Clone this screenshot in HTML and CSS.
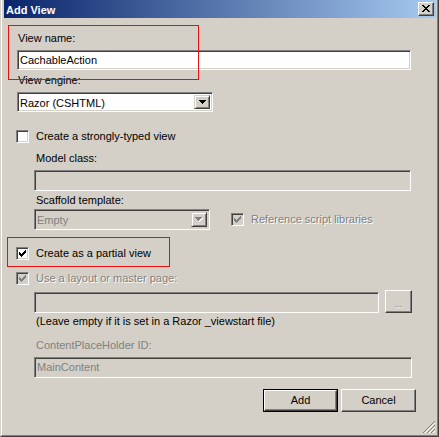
FILE: index.html
```html
<!DOCTYPE html>
<html>
<head>
<meta charset="utf-8">
<link rel="stylesheet" href="styles.css">
</head>
<body>
<div class="window">
  <div class="frame">
    <div class="titlebar">
      <span class="title">Add View</span>
      <div class="close-btn">
        <svg width="10" height="9" viewBox="0 0 10 9" shape-rendering="crispEdges"><path d="M1 1h2v1h1v1h2v-1h1v-1h2v1h-1v1h-1v1h-1v1h1v1h1v1h1v1h-2v-1h-1v-1h-2v1h-1v1h-2v-1h1v-1h1v-1h1v-1h-1v-1h-1v-1h-1z" fill="#000"/></svg>
      </div>
    </div>
    <div class="body">
      <div class="label lbl-top">View name:</div>
      <div class="textbox tb-name">CachableAction</div>
      <div class="label lbl-engine">View engine:</div>
      <div class="select sel-engine">
        <span class="sel-text">Razor (CSHTML)</span>
        <span class="sel-btn"><svg width="7" height="4" viewBox="0 0 7 4" shape-rendering="crispEdges"><path d="M0 0h7v1h-1v1h-1v1h-1v1h-1v-1h-1v-1h-1v-1h-1z" fill="#000"/></svg></span>
      </div>

      <div class="check-row row-typed">
        <span class="checkbox"></span>
        <span class="check-label">Create a strongly-typed view</span>
      </div>

      <div class="indent">
        <div class="label lbl-model">Model class:</div>
        <div class="textbox disabled tb-model"></div>
        <div class="label lbl-scaffold">Scaffold template:</div>
        <div class="scaffold-row">
          <div class="select disabled sel-scaffold">
            <span class="sel-text">Empty</span>
            <span class="sel-btn"><svg width="8" height="5" viewBox="0 0 8 5" shape-rendering="crispEdges"><path d="M1 1h7v1h-1v1h-1v1h-1v1h-1v-1h-1v-1h-1v-1h-1z" fill="#fff"/><path d="M0 0h7v1h-1v1h-1v1h-1v1h-1v-1h-1v-1h-1v-1h-1z" fill="#808080"/></svg></span>
          </div>
          <div class="check-row ref-row">
            <span class="checkbox disabled"><svg width="13" height="13" viewBox="0 0 13 13" shape-rendering="crispEdges"><path d="M3 5h1v1h1v1h1v-1h1v-1h1v-1h1v-1h1v3h-1v1h-1v1h-1v1h-1v1h-1v-1h-1v-1h-1z" fill="#808080"/></svg></span>
            <span class="check-label disabled-text">Reference script libraries</span>
          </div>
        </div>
      </div>

      <div class="check-row row-partial">
        <span class="checkbox"><svg width="13" height="13" viewBox="0 0 13 13" shape-rendering="crispEdges"><path d="M3 5h1v1h1v1h1v-1h1v-1h1v-1h1v-1h1v3h-1v1h-1v1h-1v1h-1v1h-1v-1h-1v-1h-1z" fill="#000"/></svg></span>
        <span class="check-label">Create as a partial view</span>
      </div>

      <div class="check-row row-layout">
        <span class="checkbox disabled"><svg width="13" height="13" viewBox="0 0 13 13" shape-rendering="crispEdges"><path d="M3 5h1v1h1v1h1v-1h1v-1h1v-1h1v-1h1v3h-1v1h-1v1h-1v1h-1v1h-1v-1h-1v-1h-1z" fill="#808080"/></svg></span>
        <span class="check-label disabled-text">Use a layout or master page:</span>
      </div>

      <div class="indent">
        <div class="layout-row">
          <div class="textbox disabled tb-layout"></div>
          <div class="button btn-browse"><span class="disabled-text dots">...</span></div>
        </div>
        <div class="label note">(Leave empty if it is set in a Razor _viewstart file)</div>
        <div class="label grey lbl-cph">ContentPlaceHolder ID:</div>
        <div class="textbox disabled tb-cph"><span class="grey">MainContent</span></div>
      </div>

      <div class="button-row">
        <div class="default-outline"><div class="button btn-add">Add</div></div>
        <div class="button btn-cancel">Cancel</div>
      </div>
    </div>
    <svg class="grip" width="13" height="13" viewBox="0 0 13 13" shape-rendering="crispEdges">
      <g fill="#fff"><rect x="11" y="0" width="1" height="1"/><rect x="7" y="4" width="1" height="1"/></g>
      <path d="M12 0L0 12M12 4L4 12M12 8L8 12" stroke="#808080" stroke-width="1.4"/>
      <path d="M12 2L2 12M12 6L6 12M12 10L10 12" stroke="#fff" stroke-width="1"/>
    </svg>
  </div>
  <div class="annot annot-1"></div>
  <div class="annot annot-2"></div>
</div>
</body>
</html>
```

FILE: styles.css
```css
html, body {
  margin: 0;
  padding: 0;
  background: #d4d0c8;
}
body {
  font-family: "Liberation Sans", Arial, sans-serif;
  font-size: 11px;
  line-height: 13px;
  color: #000;
}
.window {
  position: relative;
  width: 439px;
  height: 437px;
  box-sizing: border-box;
  border-left: 1px solid #d4d0c8;
  border-right: 1px solid #404040;
  border-bottom: 1px solid #404040;
  background: #d4d0c8;
}
.frame {
  position: relative;
  height: 100%;
  box-sizing: border-box;
  border-left: 1px solid #fff;
  border-right: 1px solid #808080;
  border-bottom: 1px solid #808080;
  padding: 0 1px 2px 2px;
}
.titlebar {
  height: 18px;
  background: linear-gradient(to right, #0a246a, #a6caf0);
  display: flex;
  align-items: center;
  justify-content: space-between;
  padding: 0 2px 0 2px;
  box-sizing: border-box;
}
.title {
  color: #fff;
  font-weight: bold;
  font-size: 11px;
  line-height: 16px;
  padding-top: 1px;
}
.close-btn {
  width: 16px;
  height: 14px;
  box-sizing: border-box;
  background: #d4d0c8;
  border: 1px solid;
  border-color: #fff #404040 #404040 #fff;
  box-shadow: inset -1px -1px #808080;
  display: flex;
  align-items: center;
  justify-content: center;
  padding: 0 1px 1px 0;
}
.close-btn svg { display: block; }

.body {
  padding-left: 13px;
}
.label {
  white-space: nowrap;
}
.lbl-top { margin-top: 14px; padding-left: 1px; }
.lbl-engine { margin-top: 4px; padding-left: 1px; }

.textbox {
  box-sizing: border-box;
  border: 1px solid;
  border-color: #808080 #fff #fff #808080;
  box-shadow: inset 1px 1px #404040, inset -1px -1px #d4d0c8;
  background: #fff;
  padding: 1px 2px 0 2px;
  line-height: 16px;
  white-space: nowrap;
  overflow: hidden;
}
.textbox.disabled { background: #d4d0c8; }
.tb-name { margin-top: 5px; width: 394px; height: 20px; }

.select {
  box-sizing: border-box;
  border: 1px solid;
  border-color: #808080 #fff #fff #808080;
  box-shadow: inset 1px 1px #404040, inset -1px -1px #d4d0c8;
  background: #fff;
  padding: 2px;
  display: flex;
  align-items: stretch;
}
.select.disabled { background: #d4d0c8; }
.sel-text {
  flex: 1;
  line-height: 16px;
  padding-left: 0;
}
.select.disabled .sel-text { color: #808080; }
.sel-btn {
  width: 16px;
  box-sizing: border-box;
  background: #d4d0c8;
  border: 1px solid;
  border-color: #d4d0c8 #404040 #404040 #d4d0c8;
  box-shadow: inset 1px 1px #fff, inset -1px -1px #808080;
  display: flex;
  align-items: center;
  justify-content: center;
}
.sel-btn svg { display: block; }
.sel-engine { margin-top: 5px; width: 196px; height: 20px; }

.check-row {
  display: flex;
  align-items: center;
  height: 13px;
}
.checkbox {
  width: 13px;
  height: 13px;
  box-sizing: border-box;
  flex: none;
  border: 1px solid;
  border-color: #808080 #fff #fff #808080;
  box-shadow: inset 1px 1px #404040, inset -1px -1px #d4d0c8;
  background: #fff;
  position: relative;
}
.checkbox svg {
  position: absolute;
  left: -1px;
  top: -1px;
  display: block;
}
.checkbox.disabled { background: #d4d0c8; }
.check-label {
  margin-left: 7px;
  white-space: nowrap;
}
.disabled-text {
  color: #808080;
  text-shadow: 1px 1px #fff;
}
.grey { color: #808080; }

.row-typed { margin-top: 18px; margin-left: -1px; }

.indent { padding-left: 17px; }
.indent .label { padding-left: 2px; }
.lbl-model { margin-top: 9px; }
.tb-model { margin-top: 5px; width: 377px; height: 21px; }
.lbl-scaffold { margin-top: 3px; }
.scaffold-row {
  margin-top: 2px;
  display: flex;
  align-items: center;
}
.sel-scaffold { width: 176px; height: 21px; }
.ref-row { margin-left: 21px; }

.row-partial { margin-top: 17px; margin-left: -1px; }
.row-layout { margin-top: 12px; margin-left: -1px; }

.layout-row {
  margin-top: 5px;
  display: flex;
  align-items: flex-end;
}
.tb-layout { width: 345px; height: 21px; }
.button {
  box-sizing: border-box;
  background: #d4d0c8;
  border: 1px solid;
  border-color: #fff #404040 #404040 #fff;
  box-shadow: inset -1px -1px #808080;
  display: flex;
  align-items: center;
  justify-content: center;
  white-space: nowrap;
}
.btn-browse {
  margin-left: 6px;
  width: 27px;
  height: 23px;
  align-items: flex-end;
  padding-bottom: 3px;
}
.dots { font-size: 9px; line-height: 9px; letter-spacing: 0; }
.note { margin-top: 2px; }
.lbl-cph { margin-top: 11px; }
.tb-cph { margin-top: 5px; width: 378px; height: 21px; }

.button-row {
  margin-top: 11px;
  display: flex;
  justify-content: flex-end;
  gap: 3px;
  padding-right: 20px;
}
.default-outline {
  width: 75px;
  height: 23px;
  box-sizing: border-box;
  border: 1px solid #000;
}
.btn-add {
  width: 100%;
  height: 100%;
}
.btn-cancel {
  width: 75px;
  height: 23px;
}

.grip {
  position: absolute;
  right: 1px;
  bottom: 1px;
}

.annot {
  position: absolute;
  border: 1px solid #e81010;
  pointer-events: none;
}
.annot-1 { left: 7px; top: 25px; width: 189px; height: 53px; }
.annot-2 { left: 6px; top: 237px; width: 161px; height: 28px; }
```
